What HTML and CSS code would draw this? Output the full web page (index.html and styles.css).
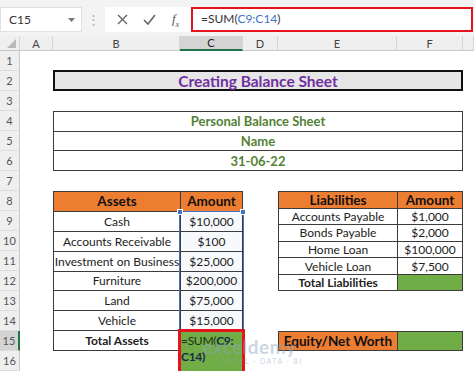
FILE: index.html
```html
<!DOCTYPE html>
<html lang="en">
<head>
  <meta charset="UTF-8">
  <meta name="viewport" content="width=device-width, initial-scale=1.0">
  <title>Balance Sheet</title>
  <link rel="stylesheet" href="styles.css">
</head>
<body>

  <!-- Formula bar -->
  <div class="formula-bar">
    <div class="name-box">
      <span>C15</span>
      <svg width="7" height="4" viewBox="0 0 7 4"><path d="M0 0h7L3.5 4z" fill="#777"/></svg>
    </div>
    <div class="grip">&#8942;</div>
    <div class="func-box">
      <svg width="11" height="11" viewBox="0 0 11 11"><path d="M1 1l9 9M10 1l-9 9" stroke="#666" stroke-width="1.4" fill="none"/></svg>
      <svg width="13" height="11" viewBox="0 0 13 11"><path d="M1 6l4 4 7-9" stroke="#666" stroke-width="1.6" fill="none"/></svg>
      <span class="fx">f<sub>x</sub></span>
    </div>
    <div class="formula-input">=SUM(<span class="ref">C9:C14</span>)</div>
  </div>

  <!-- Sheet -->
  <div class="sheet">
    <div class="col-head corner"><span class="tri"></span></div>
    <div class="col-head">A</div>
    <div class="col-head">B</div>
    <div class="col-head active">C</div>
    <div class="col-head">D</div>
    <div class="col-head">E</div>
    <div class="col-head">F</div>
    <div class="col-head"></div>

    <div class="row-head" style="grid-row: 2">1</div>
    <div class="row-head" style="grid-row: 3">2</div>
    <div class="row-head" style="grid-row: 4">3</div>
    <div class="row-head" style="grid-row: 5">4</div>
    <div class="row-head" style="grid-row: 6">5</div>
    <div class="row-head" style="grid-row: 7">6</div>
    <div class="row-head" style="grid-row: 8">7</div>
    <div class="row-head" style="grid-row: 9">8</div>
    <div class="row-head" style="grid-row: 10">9</div>
    <div class="row-head" style="grid-row: 11">10</div>
    <div class="row-head" style="grid-row: 12">11</div>
    <div class="row-head" style="grid-row: 13">12</div>
    <div class="row-head" style="grid-row: 14">13</div>
    <div class="row-head" style="grid-row: 15">14</div>
    <div class="row-head active" style="grid-row: 16">15</div>
    <div class="row-head" style="grid-row: 17">16</div>

    <div class="title">Creating Balance Sheet</div>

    <div class="tbl info">
      <div class="cell">Personal Balance Sheet</div>
      <div class="cell">Name</div>
      <div class="cell">31-06-22</div>
    </div>

    <div class="tbl assets">
      <div class="cell head">Assets</div>
      <div class="cell head">Amount</div>
      <div class="cell">Cash</div>
      <div class="cell amt">$10,000</div>
      <div class="cell">Accounts Receivable</div>
      <div class="cell amt">$100</div>
      <div class="cell">Investment on Business</div>
      <div class="cell amt">$25,000</div>
      <div class="cell">Furniture</div>
      <div class="cell amt">$200,000</div>
      <div class="cell">Land</div>
      <div class="cell amt">$75,000</div>
      <div class="cell">Vehicle</div>
      <div class="cell amt">$15,000</div>
      <div class="cell bold">Total Assets</div>
      <div class="cell green"></div>
    </div>

    <div class="tbl liab">
      <div class="cell head">Liabilities</div>
      <div class="cell head">Amount</div>
      <div class="cell">Accounts Payable</div>
      <div class="cell">$1,000</div>
      <div class="cell">Bonds Payable</div>
      <div class="cell">$2,000</div>
      <div class="cell">Home Loan</div>
      <div class="cell">$100,000</div>
      <div class="cell">Vehicle Loan</div>
      <div class="cell">$7,500</div>
      <div class="cell bold">Total Liabilities</div>
      <div class="cell green"></div>
    </div>

    <div class="tbl equity">
      <div class="cell head">Equity/Net Worth</div>
      <div class="cell green"></div>
    </div>

    <!-- referenced range C9:C14 -->
    <div class="range"></div>

    <!-- cell in edit mode -->
    <div class="editing">=SUM(<span class="ref">C9:</span><br><span class="ref">C14)</span></div>

    <div class="watermark">
      <span class="wm-name">exceldemy</span>
      <span class="wm-sub">EXCEL · DATA · BI</span>
    </div>
  </div>

</body>
</html>
```

FILE: styles.css
```css
body {
  margin: 0;
  font-family: Lato, "Open Sans", sans-serif;
  background: #fff;
  overflow: hidden;
}

/* formula bar */
.formula-bar {
  height: 36px;
  background: #f3f3f3;
  display: flex;
  align-items: flex-start;
  padding-top: 7px;
  box-sizing: border-box;
}

.name-box {
  width: 82px;
  height: 25px;
  background: #fff;
  border: 1px solid #e0e0e0;
  display: flex;
  align-items: center;
  justify-content: space-between;
  padding: 0 6px 0 8px;
  box-sizing: border-box;
  font-size: 12px;
  color: #333;
}

.grip {
  width: 23px;
  text-align: center;
  color: #b0b0b0;
  font-size: 13px;
  line-height: 25px;
}

.func-box {
  width: 86px;
  height: 25px;
  background: #fff;
  display: flex;
  align-items: center;
  justify-content: space-around;
  padding: 0 4px;
  box-sizing: border-box;
}

.fx {
  font-family: "Liberation Serif", serif;
  font-style: italic;
  font-size: 13px;
  color: #555;
}

.fx sub {
  font-size: 8px;
}

.formula-input {
  flex: 1;
  height: 25px;
  margin-right: 1px;
  border: 2.5px solid #e3141b;
  background: #fff;
  box-sizing: border-box;
  font-size: 12px;
  line-height: 20px;
  padding-left: 8px;
  color: #333;
}

.formula-input .ref {
  color: #4472c4;
}

/* sheet grid */
.sheet {
  display: grid;
  grid-template-columns: 20px 33px 127px 63px 35px 119px 66px 11px;
  grid-template-rows: 15px repeat(16, 20px);
  font-size: 12px;
  color: #222;
}

.col-head {
  grid-row: 1;
  background: #efefef;
  border-right: 1px solid #d6d6d6;
  border-bottom: 1px solid #c8c8c8;
  box-sizing: border-box;
  display: flex;
  align-items: center;
  justify-content: center;
  font-size: 11px;
  color: #444;
}

.col-head.active {
  background: #d4d4d4;
  border-bottom: 2px solid #217346;
  color: #222;
}

.corner {
  position: relative;
}

.tri {
  position: absolute;
  right: 3px;
  bottom: 2px;
  width: 0;
  height: 0;
  border-left: 9px solid transparent;
  border-bottom: 9px solid #b9b9b9;
}

.row-head {
  grid-column: 1;
  background: #efefef;
  border-right: 1px solid #c8c8c8;
  border-bottom: 1px solid #dcdcdc;
  box-sizing: border-box;
  display: flex;
  align-items: center;
  justify-content: center;
  font-size: 11px;
  color: #555;
}

.row-head.active {
  background: #d4d4d4;
  border-right: 2px solid #217346;
}

.title {
  grid-column: 3 / 8;
  grid-row: 3;
  background: #e7e6e6;
  border: 2px solid #111;
  margin-top: -1px;
  display: flex;
  align-items: center;
  justify-content: center;
  font-weight: bold;
  font-size: 15.5px;
  color: #7030a0;
}

.tbl {
  display: grid;
  gap: 1px;
  padding: 1px;
  background: #3c3c3c;
}

.cell {
  background: #fff;
  display: flex;
  align-items: center;
  justify-content: center;
  white-space: nowrap;
  overflow: hidden;
}

.cell.head {
  background: #ed7d31;
  font-weight: bold;
  font-size: 13.5px;
  color: #111;
}

.cell.green {
  background: #70ad47;
}

.cell.bold {
  font-weight: bold;
}

.info {
  grid-column: 3 / 8;
  grid-row: 5 / 8;
  grid-template-rows: repeat(3, 1fr);
}

.info .cell {
  font-weight: bold;
  font-size: 13px;
  color: #548235;
}

.assets {
  grid-column: 3 / 5;
  grid-row: 9 / 17;
  grid-template-columns: 126px 1fr;
  grid-template-rows: repeat(8, 1fr);
}

.cell.amt {
  background: #f7f9fd;
}

.liab {
  grid-column: 6 / 8;
  grid-row: 9 / 14;
  grid-template-columns: 1fr 64px;
  grid-template-rows: repeat(5, 1fr);
}

.equity {
  grid-column: 6 / 8;
  grid-row: 16;
  grid-template-columns: 1fr 64px;
}

/* reference highlight */
.range {
  grid-column: 4;
  grid-row: 10 / 16;
  border: 1.5px solid #4472c4;
  margin: 0 -1px 0 -1px;
  position: relative;
  z-index: 1;
}

.range::before,
.range::after {
  content: "";
  position: absolute;
  top: -3px;
  width: 4px;
  height: 4px;
  background: #4472c4;
  border: 1px solid #fff;
}

.range::before {
  left: -3px;
}

.range::after {
  right: -3px;
}

.editing {
  grid-column: 4;
  grid-row: 16 / 18;
  margin: -2px -2px -3px -2px;
  border: 3px solid #e3141b;
  background: #70ad47;
  z-index: 2;
  font-size: 12px;
  letter-spacing: -0.3px;
  line-height: 16px;
  padding: 1px 0 0 0;
  color: #23301c;
  white-space: nowrap;
  overflow: hidden;
}

.editing .ref {
  color: #1b2b4a;
  font-weight: bold;
}

.watermark {
  grid-column: 4 / 7;
  grid-row: 16 / 18;
  z-index: 3;
  display: flex;
  flex-direction: column;
  padding: 6px 0 0 22px;
  opacity: 0.45;
  color: #8fa3bf;
  line-height: 1;
}

.wm-name {
  font-size: 19px;
  font-weight: bold;
  letter-spacing: 0.5px;
}

.wm-sub {
  font-size: 7px;
  letter-spacing: 1.5px;
  padding-left: 20px;
  margin-top: 2px;
}
```
